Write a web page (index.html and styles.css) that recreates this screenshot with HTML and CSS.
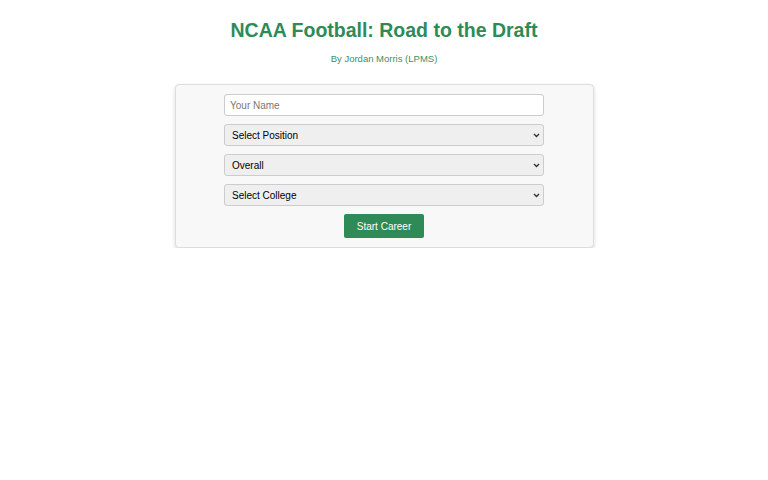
FILE: index.html
```html
<!DOCTYPE html>
<html lang="en">
<head>
  <meta charset="UTF-8" />
  <meta name="viewport" content="width=device-width, initial-scale=1.0" />
  <title>NCAA Football: Road to the Draft</title>
  <link rel="stylesheet" href="styles.css">
</head>
<body>
  <header class="header">
    <h1>NCAA Football: Road to the Draft</h1>
    <p class="byline">By Jordan Morris (LPMS)</p>
  </header>

  <div class="setup">
    <input type="text" id="name" placeholder="Your Name">
    <div class="select-wrap">
      <select id="position">
        <option>Select Position</option>
        <option>QB</option>
        <option>RB</option>
        <option>WR</option>
        <option>TE</option>
        <option>OL</option>
        <option>DL</option>
        <option>LB</option>
        <option>CB</option>
        <option>S</option>
      </select>
      <svg class="chevron" width="7" height="5" viewBox="0 0 7 5"><path d="M1 1l2.5 2.5L6 1" fill="none" stroke="#333" stroke-width="1.4"/></svg>
    </div>
    <div class="select-wrap">
      <select id="rating">
        <option>Overall</option>
      </select>
      <svg class="chevron" width="7" height="5" viewBox="0 0 7 5"><path d="M1 1l2.5 2.5L6 1" fill="none" stroke="#333" stroke-width="1.4"/></svg>
    </div>
    <div class="select-wrap">
      <select id="college">
        <option>Select College</option>
      </select>
      <svg class="chevron" width="7" height="5" viewBox="0 0 7 5"><path d="M1 1l2.5 2.5L6 1" fill="none" stroke="#333" stroke-width="1.4"/></svg>
    </div>
    <button class="start-btn">Start Career</button>
  </div>
</body>
</html>
```

FILE: styles.css
```css
* {
  margin: 0;
  padding: 0;
  box-sizing: border-box;
}

body {
  font-family: 'Liberation Sans', Arial, sans-serif;
  background: #fff;
  color: #222;
  display: flex;
  flex-direction: column;
  align-items: center;
  padding-top: 18px;
}

.header {
  text-align: center;
}

.header h1 {
  color: #2e8b57;
  font-size: 19.5px;
  line-height: 24px;
  font-weight: bold;
}

.byline {
  color: #3f8f66;
  font-size: 9.5px;
  line-height: 12px;
  margin-top: 11px;
}

.setup {
  width: 419px;
  margin-top: 19px;
  background: #f8f8f8;
  border: 1px solid #ddd;
  border-radius: 4px;
  box-shadow: 0 2px 4px rgba(0, 0, 0, 0.15);
  padding: 9px 10px 9px;
  display: flex;
  flex-direction: column;
  align-items: center;
  gap: 8px;
}

.setup input,
.setup select {
  width: 320px;
  height: 22px;
  font-family: 'Liberation Sans', Arial, sans-serif;
  font-size: 10px;
  border: 1px solid #ccc;
  border-radius: 3px;
  outline: none;
}

.setup input {
  background: #fff;
  padding: 0 5px;
}

.setup input::placeholder {
  color: #777;
}

.select-wrap {
  position: relative;
  display: flex;
}

.setup select {
  appearance: none;
  -webkit-appearance: none;
  background-color: #efefef;
  color: #000;
  padding: 0 7px;
}

.chevron {
  position: absolute;
  right: 4px;
  top: 9px;
  pointer-events: none;
}

.start-btn {
  width: 80px;
  height: 24px;
  background: #2e8b57;
  color: #fff;
  border: none;
  border-radius: 2px;
  font-family: 'Liberation Sans', Arial, sans-serif;
  font-size: 10px;
  cursor: pointer;
}

.start-btn:hover {
  background: #256f46;
}
```
